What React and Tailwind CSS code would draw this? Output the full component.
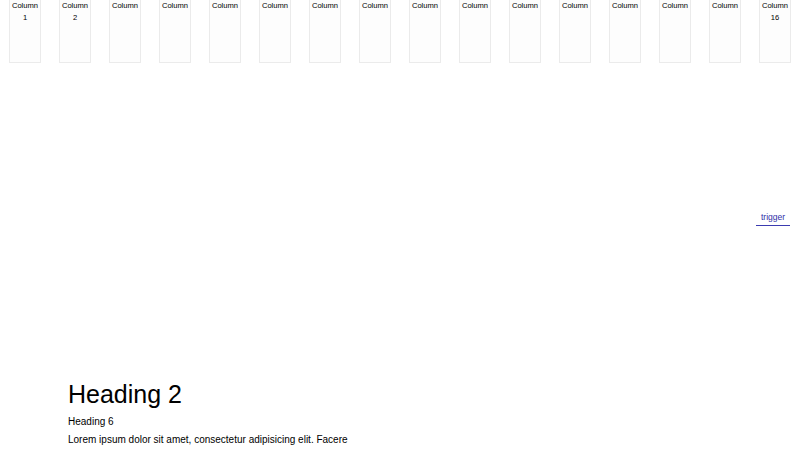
import React from 'react';

const cols = Array.from({ length: 16 }, (_, i) => i + 1);

export default function App() {
  return (
    <div className="w-[800px] h-[450px] overflow-hidden bg-white text-black" style={{ fontFamily: '"Liberation Sans", Arial, sans-serif' }}>
      <div className="flex gap-[18px] pl-[9px]">
        {cols.map((n) => (
          <div key={n} className="w-[32px] h-[63px] border border-t-0 border-[#ebebeb] bg-[#fdfdfd] text-center text-[7.6px] leading-[12px]">
            Column {n === 1 || n === 2 || n === 16 ? <><br />{n}</> : null}
          </div>
        ))}
      </div>

      <div className="flex justify-end pr-[10px] mt-[148px]">
        <div className="w-[34px] border-b border-[#3b3bb0] text-center text-[8.5px] leading-[12px] text-[#3030a8] pb-[2px]">
          trigger
        </div>
      </div>

      <div className="pl-[68px] mt-[153px]">
        <h2 className="text-[25px] leading-[30px]">Heading 2</h2>
        <h6 className="text-[10px] leading-[12px] mt-[7px]">Heading 6</h6>
        <p className="text-[10px] leading-[12px] mt-[6px]">Lorem ipsum dolor sit amet, consectetur adipisicing elit. Facere</p>
      </div>
    </div>
  );
}
